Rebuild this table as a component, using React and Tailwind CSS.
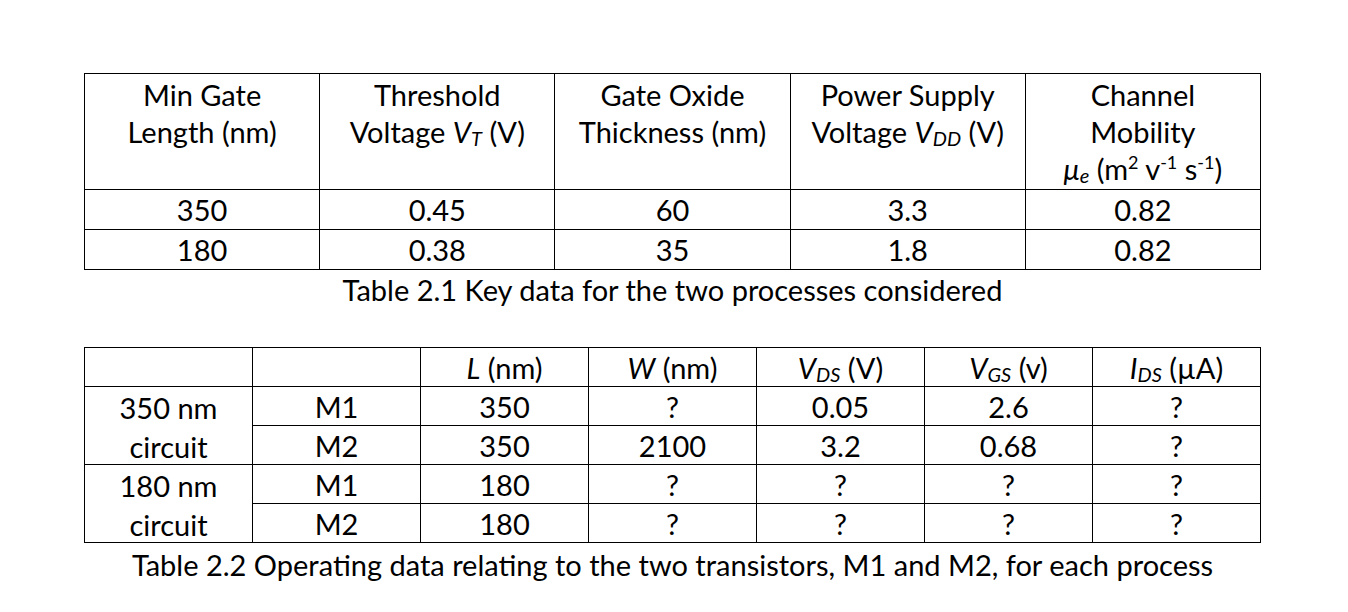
const font = { fontFamily: 'Lato, "Open Sans", sans-serif' };

const Sub = ({ children }) => (
    <sub className="italic text-[20px] -bottom-[0.15em]">{children}</sub>
);

const Sup = ({ children }) => (
    <sup className="text-[18px] -top-[0.6em]">{children}</sup>
);

// tabel pertama: data proses
const head1 = [
    ['Min Gate', 'Length (nm)'],
    ['Threshold', <>Voltage <i>V</i><Sub>T</Sub> (V)</>],
    ['Gate Oxide', 'Thickness (nm)'],
    ['Power Supply', <>Voltage <i>V</i><Sub>DD</Sub> (V)</>],
    ['Channel', 'Mobility', <><i>μ</i><Sub>e</Sub> (m<Sup>2</Sup> v<Sup>-1</Sup> s<Sup>-1</Sup>)</>],
];

const rows1 = [
    ['350', '0.45', '60', '3.3', '0.82'],
    ['180', '0.38', '35', '1.8', '0.82'],
];

// tabel kedua: data operasi transistor
const head2 = [
    '',
    '',
    <><i>L</i> (nm)</>,
    <><i>W</i> (nm)</>,
    <><i>V</i><Sub>DS</Sub> (V)</>,
    <><i>V</i><Sub>GS</Sub> (v)</>,
    <><i>I</i><Sub>DS</Sub> (µA)</>,
];

const groups = [
    {
        label: ['350 nm', 'circuit'],
        rows: [
            ['M1', '350', '?', '0.05', '2.6', '?'],
            ['M2', '350', '2100', '3.2', '0.68', '?'],
        ],
    },
    {
        label: ['180 nm', 'circuit'],
        rows: [
            ['M1', '180', '?', '?', '?', '?'],
            ['M2', '180', '?', '?', '?', '?'],
        ],
    },
];

const App = () => {
    return (
        <div className="min-h-screen bg-white text-black pl-[84px] pt-[73px] text-[29px]" style={font}>
            <div className="w-[1177px]">
                {/* Table 2.1 */}
                <div className="grid grid-cols-5 grid-rows-[115px_39px_39px] gap-px bg-black p-px">
                    {head1.map((lines, i) => (
                        <div key={i} className="bg-white text-center pt-[2px] leading-[37px]">
                            {lines.map((l, j) => <div key={j}>{l}</div>)}
                        </div>
                    ))}
                    {rows1.flat().map((v, i) => (
                        <div key={i} className="bg-white text-center pt-[1px] leading-[38px]">{v}</div>
                    ))}
                </div>
                <div className="text-center leading-[38px] pt-[1px]">
                    Table 2.1 Key data for the two processes considered
                </div>

                {/* Table 2.2 */}
                <div className="mt-[38px] grid grid-cols-7 grid-rows-[38px_38px_38px_38px_38px] gap-px bg-black p-px">
                    {head2.map((h, i) => (
                        <div key={i} className="bg-white text-center pt-[2px] leading-[36px]">{h}</div>
                    ))}
                    {groups.map((g, gi) =>
                        g.rows.map((r, ri) => (
                            <>
                                {ri === 0 && (
                                    <div key={`l${gi}`} className="row-span-2 bg-white text-center pt-[1px] leading-[39px]">
                                        <div>{g.label[0]}</div>
                                        <div>{g.label[1]}</div>
                                    </div>
                                )}
                                {r.map((v, ci) => (
                                    <div key={`${gi}-${ri}-${ci}`} className="bg-white text-center pt-[2px] leading-[36px]">{v}</div>
                                ))}
                            </>
                        ))
                    )}
                </div>
                <div className="text-center leading-[38px] pt-[3px]">
                    Table 2.2 Operating data relating to the two transistors, M1 and M2, for each process
                </div>
            </div>
        </div>
    );
};

export default App;
